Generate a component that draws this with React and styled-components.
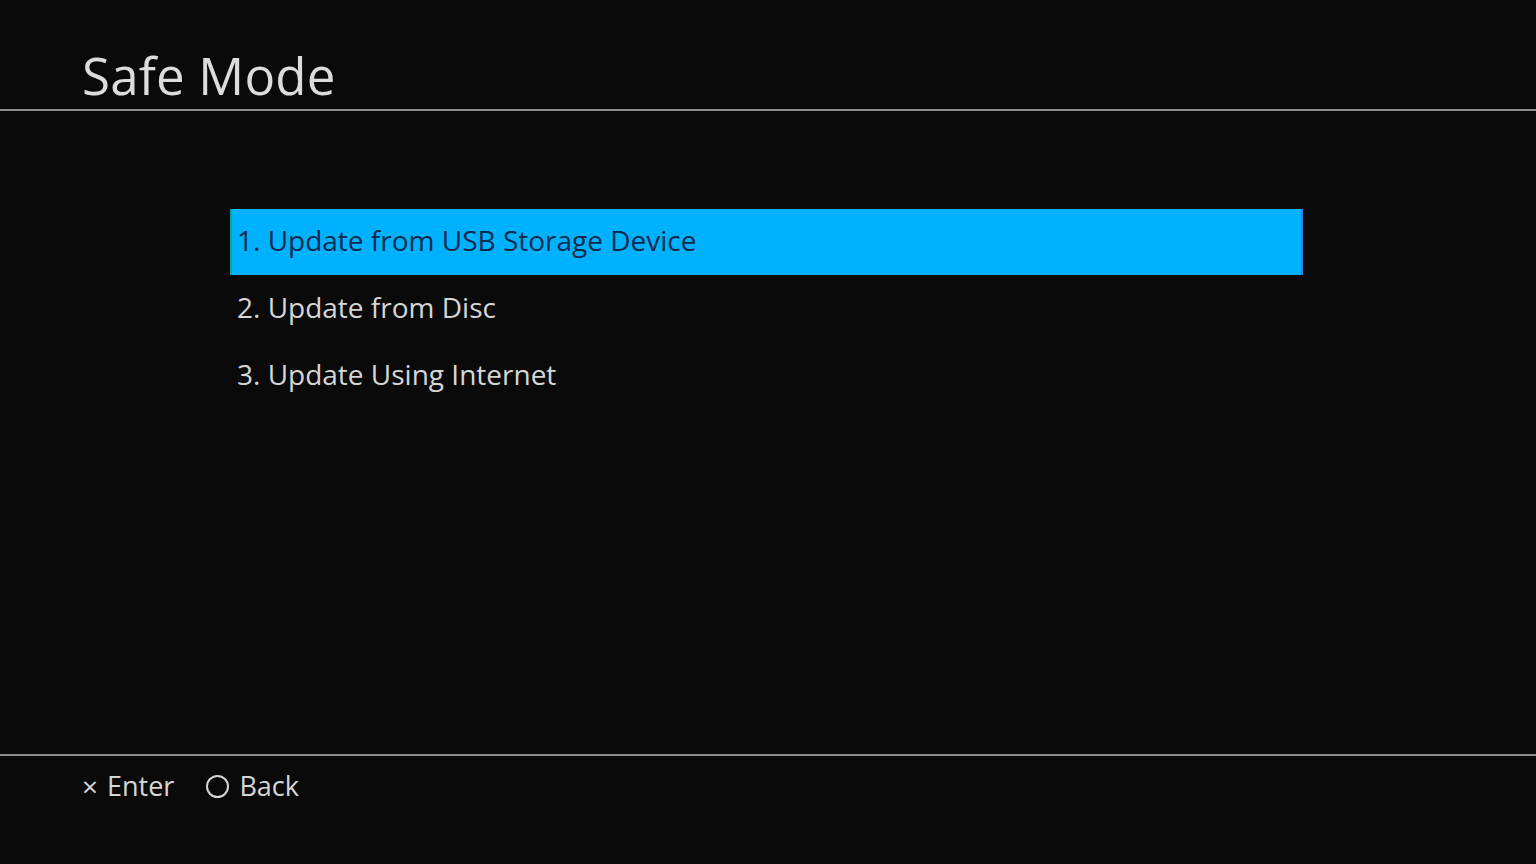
import React, { useState } from "react"
import styled, { createGlobalStyle } from "styled-components"

const GlobalStyle = createGlobalStyle`
  html, body {
    margin: 0;
    padding: 0;
    background: #0a0a0a;
  }
  body {
    font-family: "Open Sans", "Noto Sans", sans-serif;
  }
`

const MenuContent = [
  { title: "1. Update from USB Storage Device" },
  { title: "2. Update from Disc" },
  { title: "3. Update Using Internet" },
]

const App = () => {
  const [selected, setSelected] = useState(0)

  return (
    <Screen>
      <GlobalStyle />
      <Header>
        <Title>Safe Mode</Title>
      </Header>
      <Main>
        <Menu>
          {MenuContent.map((item, index) => (
            <MenuItem
              key={index}
              active={selected === index}
              onMouseEnter={() => setSelected(index)}
            >
              {item.title}
            </MenuItem>
          ))}
        </Menu>
      </Main>
      <Footer>
        <Hint>
          <Cross>×</Cross>
          Enter
        </Hint>
        <Hint>
          <Circle />
          Back
        </Hint>
      </Footer>
    </Screen>
  )
}

const Screen = styled.div`
  width: 1536px;
  height: 864px;
  display: flex;
  flex-direction: column;
  background: #0a0a0a;
  color: #d6d6d6;
  overflow: hidden;
`

const Header = styled.div`
  height: 111px;
  box-sizing: border-box;
  display: flex;
  align-items: flex-end;
  padding: 0 0 0 82px;
  border-bottom: 2px solid #8c8c8c;
`

const Title = styled.h1`
  margin: 0;
  font-size: 51px;
  line-height: 1;
  padding-bottom: 8px;
  font-weight: 400;
  color: #dcdcdc;
  letter-spacing: 0.2px;
`

const Main = styled.div`
  flex: 1;
  padding: 98px 0 0 230px;
`

const Menu = styled.div`
  display: flex;
  flex-direction: column;
  width: 1073px;
  gap: 1px;
`

const MenuItem = styled.div`
  height: 66px;
  box-sizing: border-box;
  display: flex;
  align-items: center;
  padding: 0 0 4px 7px;
  font-size: 28px;
  color: ${({ active }) => (active ? "#0b2b4d" : "#d6d6d6")};
  background: ${({ active }) => (active ? "#00b1fe" : "transparent")};
  box-shadow: ${({ active }) =>
    active ? "inset 2px 0 0 #00a89a, inset -2px 0 0 #2f7df0" : "none"};
  cursor: pointer;
`

const Footer = styled.div`
  height: 110px;
  box-sizing: border-box;
  border-top: 2px solid #8c8c8c;
  display: flex;
  align-items: flex-start;
  gap: 32px;
  padding: 11px 0 0 82px;
`

const Hint = styled.div`
  display: flex;
  align-items: center;
  gap: 10px;
  font-size: 27px;
  color: #d6d6d6;
`

const Cross = styled.span`
  font-size: 28px;
  line-height: 1;
  margin-right: -1px;
`

const Circle = styled.span`
  width: 23px;
  height: 23px;
  border: 2.5px solid #d6d6d6;
  border-radius: 50%;
  box-sizing: border-box;
  margin-top: 2px;
`

export default App
